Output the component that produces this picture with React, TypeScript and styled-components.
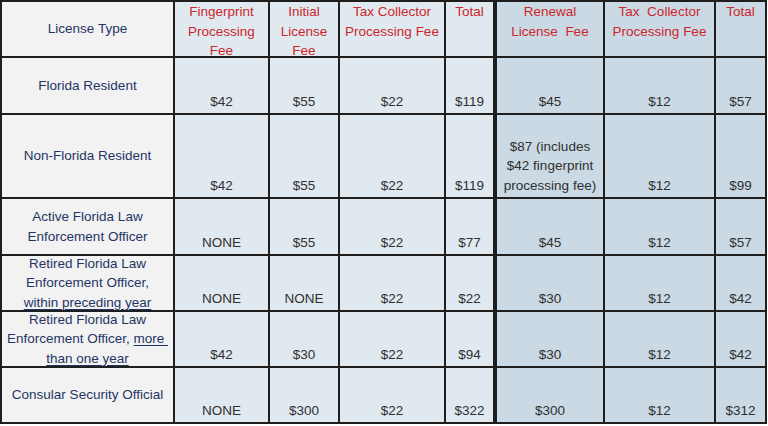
import React from 'react';
import styled, { createGlobalStyle } from 'styled-components';

const GlobalStyle = createGlobalStyle`
  body {
    margin: 0;
    background: #ffffff;
    font-family: 'Liberation Sans', Arial, sans-serif;
  }
`;

type Tone = 'gray' | 'light' | 'dark';

const tones: Record<Tone, string> = {
  gray: '#f2f2f2',
  light: '#e1e9f0',
  dark: '#cad9e4',
};

const Grid = styled.div`
  display: grid;
  grid-template-columns: 171px 93px 68px 104px 47px 108px 109px 49px;
  grid-template-rows: 54px 55px 82px 55px 54px 54px 54px;
  gap: 2px;
  padding: 2px;
  width: fit-content;
  background: #1e1e1e;
  font-size: 13.5px;
  line-height: 19.5px;
`;

const Cell = styled.div<{ $tone: Tone; $divider?: boolean }>`
  display: flex;
  flex-direction: column;
  align-items: center;
  text-align: center;
  background: ${({ $tone }) => tones[$tone]};
  border-left: ${({ $divider }) => ($divider ? '2px solid #1e1e1e' : 'none')};
  white-space: nowrap;
`;

const HeaderCell = styled(Cell)`
  justify-content: flex-start;
  color: #cc262c;
`;

const LabelCell = styled(Cell)`
  justify-content: center;
  color: #1f3565;
`;

const FeeCell = styled(Cell)`
  justify-content: flex-end;
  padding-bottom: 2px;
  color: #303030;
`;

const Under = styled.span`
  text-decoration: underline;
  text-decoration-color: #1f3565;
  text-underline-offset: 2px;
`;

const Lines = ({ lines }: { lines: React.ReactNode[] }) => (
  <>
    {lines.map((l, i) => (
      <div key={i}>{l}</div>
    ))}
  </>
);

const headers: { lines: string[]; tone: Tone; divider?: boolean }[] = [
  { lines: ['Fingerprint', 'Processing', 'Fee'], tone: 'light' },
  { lines: ['Initial', 'License', 'Fee'], tone: 'light' },
  { lines: ['Tax Collector', 'Processing Fee'], tone: 'light' },
  { lines: ['Total'], tone: 'light' },
  { lines: ['Renewal', 'License\u00a0\u00a0Fee'], tone: 'dark', divider: true },
  { lines: ['Tax\u00a0\u00a0Collector', 'Processing Fee'], tone: 'dark' },
  { lines: ['Total'], tone: 'dark' },
];

type Row = { label: React.ReactNode[]; fees: React.ReactNode[][] };

const rows: Row[] = [
  {
    label: ['Florida Resident'],
    fees: [['$42'], ['$55'], ['$22'], ['$119'], ['$45'], ['$12'], ['$57']],
  },
  {
    label: ['Non-Florida Resident'],
    fees: [
      ['$42'],
      ['$55'],
      ['$22'],
      ['$119'],
      ['$87 (includes', '$42 fingerprint', 'processing fee)'],
      ['$12'],
      ['$99'],
    ],
  },
  {
    label: ['Active Florida Law', 'Enforcement Officer'],
    fees: [['NONE'], ['$55'], ['$22'], ['$77'], ['$45'], ['$12'], ['$57']],
  },
  {
    label: [
      'Retired Florida Law',
      'Enforcement Officer,',
      <Under>within preceding year</Under>,
    ],
    fees: [['NONE'], ['NONE'], ['$22'], ['$22'], ['$30'], ['$12'], ['$42']],
  },
  {
    label: [
      'Retired Florida Law',
      <>
        Enforcement Officer, <Under>more&nbsp;</Under>
      </>,
      <Under>than one year</Under>,
    ],
    fees: [['$42'], ['$30'], ['$22'], ['$94'], ['$30'], ['$12'], ['$42']],
  },
  {
    label: ['Consular Security Official'],
    fees: [['NONE'], ['$300'], ['$22'], ['$322'], ['$300'], ['$12'], ['$312']],
  },
];

const feeTone = (i: number): Tone => (i < 4 ? 'light' : 'dark');

const App = () => {
  return (
    <>
      <GlobalStyle />
      <Grid>
        <LabelCell $tone="gray">License Type</LabelCell>
        {headers.map((h, i) => (
          <HeaderCell key={i} $tone={h.tone} $divider={h.divider}>
            <Lines lines={h.lines} />
          </HeaderCell>
        ))}
        {rows.map((row, r) => (
          <React.Fragment key={r}>
            <LabelCell $tone="gray">
              <Lines lines={row.label} />
            </LabelCell>
            {row.fees.map((fee, i) => (
              <FeeCell key={i} $tone={feeTone(i)} $divider={i === 4}>
                <Lines lines={fee} />
              </FeeCell>
            ))}
          </React.Fragment>
        ))}
      </Grid>
    </>
  );
};

export default App;
